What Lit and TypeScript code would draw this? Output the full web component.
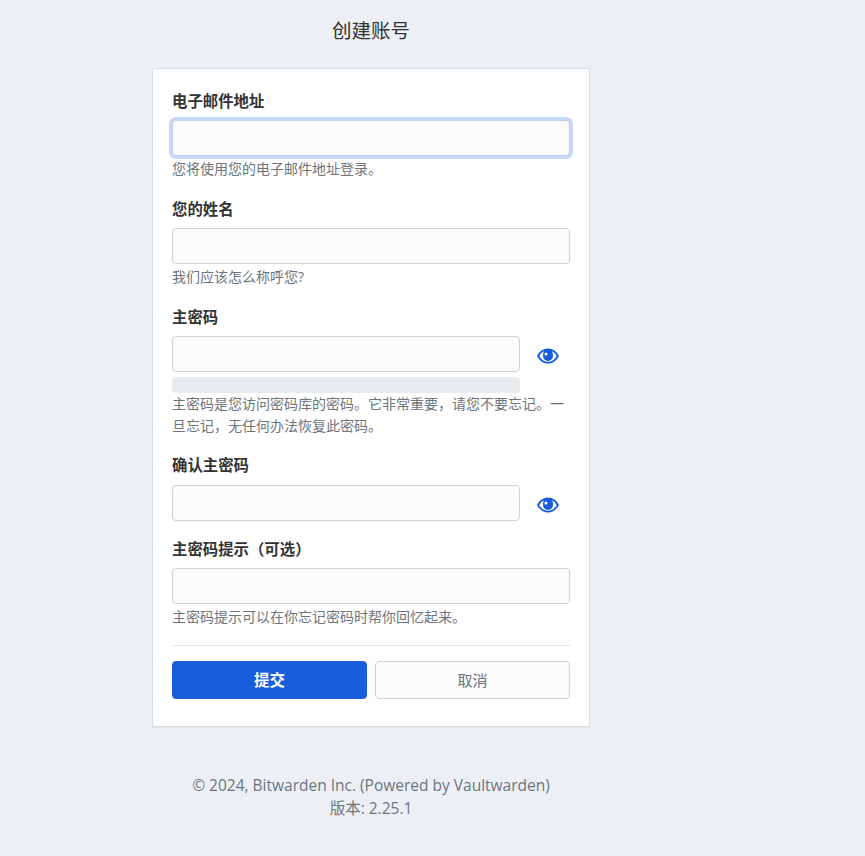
import { LitElement, html, css } from "lit";
import { customElement } from "lit/decorators.js";

const eye = html`<svg class="eye" viewBox="0 0 22 16" width="22" height="16" aria-hidden="true"><path fill="#175ddc" fill-rule="evenodd" d="M11 .5C6.200 .5 2.400 3.600 .2 7.600a.9 .9 0 0 0 0 .8c2.200 4 6 7.100 10.800 7.100s8.600-3.100 10.800-7.100a.9 .9 0 0 0 0-.8C19.600 3.600 15.800 .5 11 .5zM2.300 8C3.500 5.800 5.200 4 7.300 3a6 6 0 0 0-1.300 5 5 5 0 0 0 10 0 6 6 0 0 0-1.300-5c2.100 1 3.800 2.800 5 5-2 3.600-5 5.800-8.700 5.800S4.300 11.600 2.300 8z"/><circle cx="9" cy="6" r="1.500" fill="#fff"/></svg>`;

@customElement("app-root")
export class AppRoot extends LitElement {
  static styles = css`
    :host {
      display: block;
      min-height: 856px;
      background: #ecf0f5;
      font-family: "Open Sans", "Noto Sans CJK SC", sans-serif;
      color: #333;
    }
    .page { width: 438px; margin-left: 152px; padding-top: 17px; display: flex; flex-direction: column; }
    h1 { margin: 0; height: 28px; line-height: 28px; font-size: 19.5px; font-weight: 400; text-align: center; color: #333; }
    .card {
      box-sizing: border-box; height: 659px; margin-top: 23px; padding: 20px 19px;
      background: #fff; border: 1px solid #dadee3; box-shadow: 0 1px 1px rgba(0, 0, 0, 0.04);
      display: flex; flex-direction: column;
    }
    .field { display: flex; flex-direction: column; }
    label { font-size: 15.4px; line-height: 24px; height: 24px; padding-top: 1px; margin-bottom: 6px; font-weight: 700; color: #333; }
    .f3 label { margin-bottom: 7px; }
    .input {
      box-sizing: border-box; height: 36px; background: #fbfbfb;
      border: 1px solid #ccd2d8; border-radius: 4px; width: 100%; flex: none;
    }
    .focus { border-color: #bcd0f2; box-shadow: 0 0 0 3px #c8d8f5; }
    .hint { font-size: 14px; line-height: 22px; color: #6c757d; margin-top: 2px; }
    .tight { margin-top: 0; }
    .row { display: flex; align-items: center; }
    .row .input { flex: 1; }
    .toggle { width: 50px; flex: none; display: flex; justify-content: center; padding: 3px 0 0 5px; box-sizing: border-box; }
    .bar { height: 16px; background: #e9ecef; border-radius: 4px; width: 348px; margin-top: 5px; }
    hr { border: 0; border-top: 1px solid #e3e6e9; margin: 17px 0 15px; width: 100%; }
    .buttons { display: flex; gap: 8px; }
    button {
      box-sizing: border-box; flex: 1; height: 38px; border-radius: 4px; font-family: inherit;
      font-size: 15px; padding: 0 0 2px;
    }
    .primary { background: #175ddc; border: 1px solid #175ddc; color: #fff; font-weight: 700; font-size: 15.5px; }
    .secondary { background: #fbfbfb; border: 1px solid #ccd2d8; color: #6c757d; font-weight: 400; }
    footer { margin-top: 47px; text-align: center; font-size: 15.5px; line-height: 23px; color: #6c757d; }
    .f1 { height: 108px; }
    .f2 { height: 148px; }
    .f3 { height: 84px; }
  `;

  render() {
    return html`<div class="page">
      <h1>创建账号</h1>
      <div class="card">
        <div class="field f1">
          <label>电子邮件地址</label>
          <div class="input focus"></div>
          <div class="hint">您将使用您的电子邮件地址登录。</div>
        </div>
        <div class="field f1">
          <label>您的姓名</label>
          <div class="input"></div>
          <div class="hint">我们应该怎么称呼您?</div>
        </div>
        <div class="field f2">
          <label>主密码</label>
          <div class="row"><div class="input"></div><div class="toggle">${eye}</div></div>
          <div class="bar"></div>
          <div class="hint tight">主密码是您访问密码库的密码。它非常重要，请您不要忘记。一旦忘记，无任何办法恢复此密码。</div>
        </div>
        <div class="field f3">
          <label>确认主密码</label>
          <div class="row"><div class="input"></div><div class="toggle">${eye}</div></div>
        </div>
        <div class="field">
          <label>主密码提示（可选）</label>
          <div class="input"></div>
          <div class="hint">主密码提示可以在你忘记密码时帮你回忆起来。</div>
        </div>
        <hr />
        <div class="buttons">
          <button class="primary">提交</button>
          <button class="secondary">取消</button>
        </div>
      </div>
      <footer>© 2024, Bitwarden Inc. (Powered by Vaultwarden)<br />版本: 2.25.1</footer>
    </div>`;
  }
}
